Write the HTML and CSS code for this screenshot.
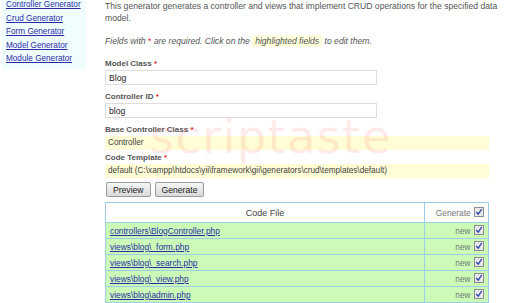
FILE: index.html
```html
<!DOCTYPE html>
<html lang="en">
<head>
    <meta charset="UTF-8">
    <title>Crud Generator</title>
    <link rel="stylesheet" href="styles.css">
</head>
<body>
    <div class="page">
        <div class="sidebar">
            <ul>
                <li><a href="#">Controller Generator</a></li>
                <li><a href="#">Crud Generator</a></li>
                <li><a href="#">Form Generator</a></li>
                <li><a href="#">Model Generator</a></li>
                <li><a href="#">Module Generator</a></li>
            </ul>
        </div>

        <div class="content">
            <p class="intro">This generator generates a controller and views that implement CRUD operations for the specified data model.</p>
            <p class="note">Fields with <span class="required">*</span> are required. Click on the <span class="sticky">highlighted fields</span> to edit them.</p>

            <form class="form">
                <div class="row">
                    <label>Model Class <span class="required">*</span></label>
                    <input type="text" value="Blog">
                </div>
                <div class="row">
                    <label>Controller ID <span class="required">*</span></label>
                    <input type="text" value="blog">
                </div>
                <div class="row sticky-row">
                    <label>Base Controller Class <span class="required">*</span></label>
                    <div class="value">Controller</div>
                </div>
                <div class="row sticky-row">
                    <label>Code Template <span class="required">*</span></label>
                    <div class="value">default (C:\xampp\htdocs\yii\framework\gii\generators\crud\templates\default)</div>
                </div>
                <div class="buttons">
                    <button type="button">Preview</button>
                    <button type="button">Generate</button>
                </div>

                <table class="preview">
                    <tr>
                        <th class="file">Code File</th>
                        <th class="confirm">Generate <span class="check"><svg viewBox="0 0 10 10"><rect x="0.5" y="0.5" width="9" height="9" fill="#e8e8e8" stroke="#8e8e8e"/><path d="M2.3 5 L4.2 7.2 L7.8 2" fill="none" stroke="#2a3fae" stroke-width="1.3"/></svg></span></th>
                    </tr>
                    <tr>
                        <td class="file"><a href="#">controllers\BlogController.php</a></td>
                        <td class="confirm">new <span class="check"><svg viewBox="0 0 10 10"><rect x="0.5" y="0.5" width="9" height="9" fill="#e8e8e8" stroke="#8e8e8e"/><path d="M2.3 5 L4.2 7.2 L7.8 2" fill="none" stroke="#2a3fae" stroke-width="1.3"/></svg></span></td>
                    </tr>
                    <tr>
                        <td class="file"><a href="#">views\blog\_form.php</a></td>
                        <td class="confirm">new <span class="check"><svg viewBox="0 0 10 10"><rect x="0.5" y="0.5" width="9" height="9" fill="#e8e8e8" stroke="#8e8e8e"/><path d="M2.3 5 L4.2 7.2 L7.8 2" fill="none" stroke="#2a3fae" stroke-width="1.3"/></svg></span></td>
                    </tr>
                    <tr>
                        <td class="file"><a href="#">views\blog\_search.php</a></td>
                        <td class="confirm">new <span class="check"><svg viewBox="0 0 10 10"><rect x="0.5" y="0.5" width="9" height="9" fill="#e8e8e8" stroke="#8e8e8e"/><path d="M2.3 5 L4.2 7.2 L7.8 2" fill="none" stroke="#2a3fae" stroke-width="1.3"/></svg></span></td>
                    </tr>
                    <tr>
                        <td class="file"><a href="#">views\blog\_view.php</a></td>
                        <td class="confirm">new <span class="check"><svg viewBox="0 0 10 10"><rect x="0.5" y="0.5" width="9" height="9" fill="#e8e8e8" stroke="#8e8e8e"/><path d="M2.3 5 L4.2 7.2 L7.8 2" fill="none" stroke="#2a3fae" stroke-width="1.3"/></svg></span></td>
                    </tr>
                    <tr>
                        <td class="file"><a href="#">views\blog\admin.php</a></td>
                        <td class="confirm">new <span class="check"><svg viewBox="0 0 10 10"><rect x="0.5" y="0.5" width="9" height="9" fill="#e8e8e8" stroke="#8e8e8e"/><path d="M2.3 5 L4.2 7.2 L7.8 2" fill="none" stroke="#2a3fae" stroke-width="1.3"/></svg></span></td>
                    </tr>
                </table>
            </form>

            <div class="watermark">scriptaste</div>
        </div>
    </div>
</body>
</html>
```

FILE: styles.css
```css
body { margin: 0; font-family: "Liberation Sans", Arial, sans-serif; font-size: 8.6px; color: #555; background: #fff; overflow: hidden; }
.page { display: flex; align-items: flex-start; }

.sidebar { width: 84px; height: 69px; margin-left: 2px; background: #effdff; flex-shrink: 0; }
.sidebar ul { list-style: none; margin: 0; padding: 0 0 0 4px; }
.sidebar li { height: 13.5px; line-height: 9px; font-size: 8.2px; white-space: nowrap; }
.sidebar a { color: #2b2ba6; }

.content { position: relative; margin-left: 19px; width: 405px; }
.intro { margin: 0; line-height: 12px; }
.note { margin: 10px 0 0; font-style: italic; line-height: 14px; }
.required { color: #e02020; font-style: normal; }
.sticky { background: #ffffdd; padding: 1px 3px; }

.form { margin-top: 9px; }
.row { margin-bottom: 5px; }
.row label { display: block; font-weight: bold; font-size: 8px; line-height: 13px; height: 13px; color: #555; }
.row input { display: block; width: 272px; height: 15px; box-sizing: border-box; border: 1px solid #dddddd; padding: 0 3px; font-family: inherit; font-size: 8.6px; color: #222; margin: 0; }
.sticky-row { margin-bottom: 1px; }
.value { background: #fffdd6; width: 381px; height: 14px; line-height: 14px; padding-left: 3px; color: #444; font-size: 8.2px; }

.buttons { display: flex; gap: 4px; margin-top: 4px; margin-bottom: 5px; padding-left: 1px; }
.buttons button { height: 15px; padding: 0 6px; font-family: inherit; font-size: 8.6px; color: #222; background: linear-gradient(#f6f6f6, #dadada); border: 1px solid #9a9a9a; border-radius: 2px; line-height: 12px; }

.preview { border-collapse: collapse; width: 384px; border: 1px solid #9ccfe6; }
.preview th, .preview td { border: 1px solid #9ccfe6; padding: 0 4px; font-size: 8.4px; }
.preview th { background: #fff; font-weight: normal; color: #444; height: 19px; }
.preview th.file { font-size: 9px; }
.preview td { background: #ccfbb8; height: 15px; }
.preview .confirm { text-align: right; width: 55px; color: #777; white-space: nowrap; }
.preview td.file a { color: #2b2ba6; }
.check { display: inline-block; width: 10px; height: 10px; margin-left: 1px; vertical-align: -1px; }
.check svg { display: block; width: 10px; height: 10px; }

.watermark { position: absolute; left: 45px; top: 114px; font-family: "DejaVu Sans", sans-serif; font-size: 46px; line-height: 1; letter-spacing: 1.5px; color: rgba(255, 40, 40, 0.11); pointer-events: none; }
```
